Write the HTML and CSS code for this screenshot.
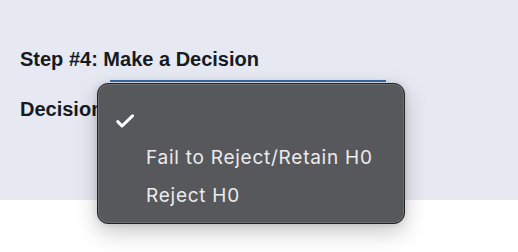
FILE: index.html
```html
<!DOCTYPE html>
<html>
<head>
<meta charset="utf-8">
<link rel="stylesheet" href="styles.css">
</head>
<body>
<section class="step">
  <h3 class="step-title">Step #4: Make a Decision</h3>
  <div class="field">
    <span class="field-label">Decision</span>
    <div class="select"></div>
  </div>
</section>
<div class="menu">
  <div class="menu-item checked"><svg class="check" width="18" height="14" viewBox="0 0 18 14"><path d="M1.8 7.6 L6 12 L16.5 1.8" fill="none" stroke="#fff" stroke-width="3" stroke-linecap="round" stroke-linejoin="round"/></svg></div>
  <div class="menu-item">Fail to Reject/Retain H0</div>
  <div class="menu-item">Reject H0</div>
</div>
</body>
</html>
```
FILE: styles.css
```css
html, body {
  margin: 0;
  padding: 0;
  background: #ffffff;
  font-family: "Liberation Sans", Arial, sans-serif;
}
.step {
  background: #e6e9f2;
  height: 200px;
  box-sizing: border-box;
  padding: 47px 20px 0 20px;
}
.step-title {
  margin: 0;
  font-size: 20px;
  line-height: 24px;
  font-weight: bold;
  color: #161a22;
}
.field {
  display: flex;
  align-items: flex-start;
  margin-top: 9px;
}
.field-label {
  font-size: 20px;
  line-height: 24px;
  font-weight: bold;
  color: #161a22;
  margin-top: 17px;
  width: 90px;
  flex: none;
  white-space: nowrap;
}
.select {
  width: 276px;
  height: 34px;
  border-top: 2px solid #3f69a6;
  background: #e6e9f2;
}
.menu {
  position: absolute;
  left: 97px;
  top: 83px;
  width: 308px;
  height: 141px;
  box-sizing: border-box;
  padding-top: 17px;
  background: #56585c;
  border: 1px solid #232325;
  border-radius: 11px;
  box-shadow: inset 0 0 0 1px rgba(255,255,255,0.14), 0 8px 22px rgba(0,0,0,0.22), 0 0 6px rgba(0,0,0,0.12);
  font-family: Inter, "Liberation Sans", sans-serif;
}
.menu-item {
  height: 38px;
  line-height: 38px;
  font-size: 19px;
  letter-spacing: 0.75px;
  color: #ececec;
  padding-left: 48px;
  position: relative;
}
.check {
  position: absolute;
  left: 18px;
  top: 13px;
}
```
